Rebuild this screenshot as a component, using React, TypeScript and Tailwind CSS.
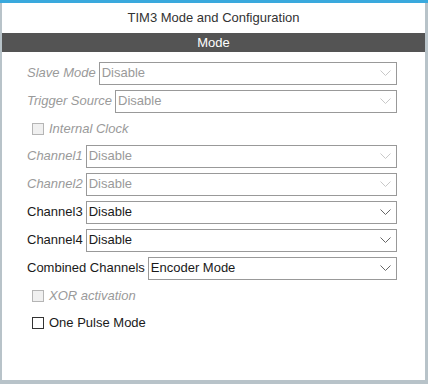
import { ReactNode } from 'react';

function Chevron({ disabled }: { disabled?: boolean }) {
  return (
    <svg width="11" height="6" viewBox="0 0 11 6" className="shrink-0">
      <path d="M0.5 0.5 L5.5 5.5 L10.5 0.5" fill="none" stroke={disabled ? '#c8c8c8' : '#666'} strokeWidth="1" />
    </svg>
  );
}

function SelectRow({ label, value, disabled }: { label: string; value: string; disabled?: boolean }) {
  return (
    <div className="flex items-center h-[28px]">
      <span className={`whitespace-nowrap pr-[3px] ${disabled ? 'italic text-[#9a9a9a]' : 'text-[#1a1a1a]'}`}>{label}</span>
      <div className={`flex-1 h-[23px] flex items-center justify-between border border-[#999] bg-white pl-[2px] pr-[5px] ${disabled ? 'text-[#9a9a9a]' : 'text-[#1a1a1a]'}`}>
        <span>{value}</span>
        <Chevron disabled={disabled} />
      </div>
    </div>
  );
}

function CheckRow({ label, disabled }: { label: ReactNode; disabled?: boolean }) {
  return (
    <div className="flex items-center h-[27px] pl-[5px] gap-[5px]">
      <span className={`w-[12px] h-[12px] border ${disabled ? 'border-[#b5b5b5] bg-[#f0f0f0]' : 'border-[#333] bg-white'}`} />
      <span className={disabled ? 'italic text-[#9a9a9a]' : 'text-[#1a1a1a]'}>{label}</span>
    </div>
  );
}

export default function App() {
  return (
    <div className="w-[428px] h-[384px] bg-[#b8c3c9] pl-[2px] pr-[3px] pb-[4px] flex flex-col text-[13px]" style={{ fontFamily: '"Liberation Sans", Arial, sans-serif' }}>
      <div className="h-[3px] bg-[#3aa9dd] -ml-[2px] -mr-[3px]" />
      <div className="flex-1 bg-white flex flex-col">
        <div className="h-[30px] flex items-center justify-center text-[#333] text-[13px]">TIM3 Mode and Configuration</div>
        <div className="h-[19px] bg-[#545454] text-white text-[13px] flex items-center justify-center">Mode</div>
        <div className="pl-[25px] pr-[28px] pt-[7px] flex flex-col">
          <SelectRow label="Slave Mode" value="Disable" disabled />
          <SelectRow label="Trigger Source" value="Disable" disabled />
          <CheckRow label="Internal Clock" disabled />
          <SelectRow label="Channel1" value="Disable" disabled />
          <SelectRow label="Channel2" value="Disable" disabled />
          <SelectRow label="Channel3" value="Disable" />
          <SelectRow label="Channel4" value="Disable" />
          <SelectRow label="Combined Channels" value="Encoder Mode" />
          <CheckRow label="XOR activation" disabled />
          <CheckRow label="One Pulse Mode" />
        </div>
      </div>
    </div>
  );
}
